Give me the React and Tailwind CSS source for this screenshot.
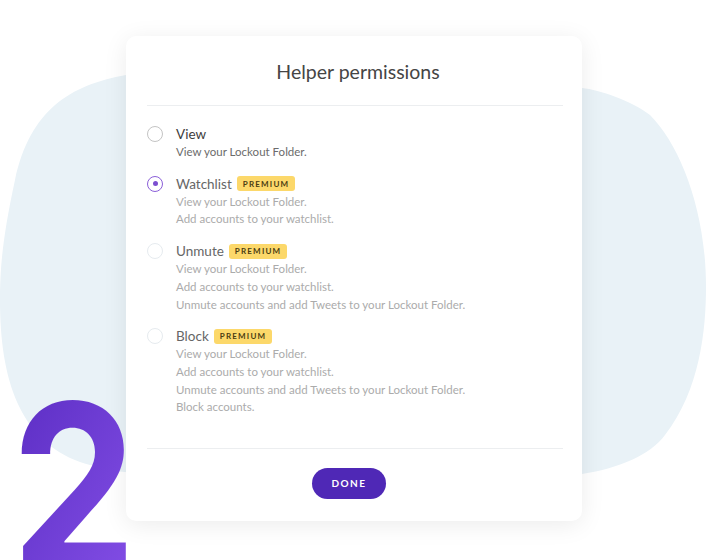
import React from "react";

const items = [
  { label: "View", premium: false, state: "off", lines: ["View your Lockout Folder."] },
  { label: "Watchlist", premium: true, state: "on", lines: ["View your Lockout Folder.", "Add accounts to your watchlist."] },
  { label: "Unmute", premium: true, state: "disabled", lines: ["View your Lockout Folder.", "Add accounts to your watchlist.", "Unmute accounts and add Tweets to your Lockout Folder."] },
  { label: "Block", premium: true, state: "disabled", lines: ["View your Lockout Folder.", "Add accounts to your watchlist.", "Unmute accounts and add Tweets to your Lockout Folder.", "Block accounts."] },
];

function Radio({ state }) {
  if (state === "on") {
    return (
      <span className="w-4 h-4 rounded-full border-[1.5px] border-[#8b5fd9] flex items-center justify-center shrink-0">
        <span className="w-[5px] h-[5px] rounded-full bg-[#7c4fd0]" />
      </span>
    );
  }
  if (state === "off") {
    return <span className="w-4 h-4 rounded-full border-[1.5px] border-[#c4c4c4] shrink-0" />;
  }
  return <span className="w-4 h-4 rounded-full border-[1.5px] border-[#e6ebef] shrink-0" />;
}

export default function App() {
  return (
    <div className="relative w-[718px] h-[560px] overflow-hidden bg-white" style={{ fontFamily: "Lato, 'Noto Sans', sans-serif" }}>
      <svg className="absolute left-0 top-0" width="718" height="560" viewBox="0 0 718 560">
        <path
          d="M126 75 C 70 85, 30 110, 15 180 C 2 240, 0 270, 0 300 C 0 380, 20 440, 80 462 C 110 472, 130 473, 160 474 L 582 474 C 620 468, 650 455, 665 435 C 700 390, 706 330, 706 287 C 706 210, 680 145, 650 115 C 630 100, 600 90, 582 88 L 300 80 Z"
          fill="#e9f2f7"
        />
      </svg>

      <div className="relative ml-[126px] mt-[36px] w-[456px] bg-white rounded-[10px] shadow-[0_4px_24px_rgba(0,0,0,0.08)] pl-[21px] pr-[19px] pt-[24px] pb-[22px]">
        <h1 className="pl-[6px] text-center text-[19.5px] leading-[24px] text-[#454545]">Helper permissions</h1>
        <div className="mt-[21px] h-px bg-[#eceef0]" />
        <div className="mt-[19px] flex flex-col gap-[14px]">
          {items.map((it) => (
            <div key={it.label} className="flex">
              <div className="h-[18px] flex items-center">
                <Radio state={it.state} />
              </div>
              <div className="ml-[13px]">
                <div className="flex items-center h-[18px] gap-[5px]">
                  <span className={`text-[13.5px] ${it.state === "off" ? "text-[#3d3d3d]" : "text-[#666]"}`}>{it.label}</span>
                  {it.premium && (
                    <span className="bg-[#fcd86a] text-[#4a3c12] text-[8px] font-bold tracking-[1.2px] leading-none px-[6px] py-[3.5px] rounded-[3px]">
                      PREMIUM
                    </span>
                  )}
                </div>
                {it.lines.map((l) => (
                  <div key={l} className={`text-[11.5px] leading-[17.7px] ${it.state === "off" ? "text-[#6b6b6b]" : "text-[#ababab]"}`}>{l}</div>
                ))}
              </div>
            </div>
          ))}
        </div>
        <div className="mt-[32px] h-px bg-[#eceef0]" />
        <div className="mt-[19px] flex justify-center">
          <button className="mr-[12px] w-[74px] h-[31px] rounded-full bg-[#4f28b6] text-white text-[10px] font-bold tracking-[1.5px]">DONE</button>
        </div>
      </div>

      <div
        className="absolute left-[11px] top-[371px] text-[232px] leading-none font-bold origin-left scale-x-[0.86] bg-gradient-to-br from-[#5a2bc2] to-[#8650e8] bg-clip-text text-transparent"
        style={{ fontFamily: "Inter, sans-serif" }}
      >
        2
      </div>
    </div>
  );
}
